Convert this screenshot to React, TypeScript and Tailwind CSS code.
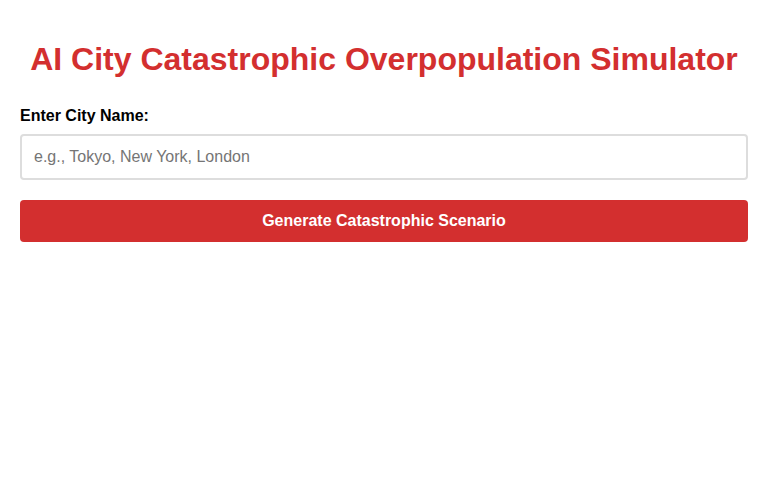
export default function App() {
  return (
    <div className="min-h-[480px] bg-white px-5 pt-[41px]" style={{ fontFamily: '"Liberation Sans", Arial, sans-serif' }}>
      <h1 className="text-center text-[32px] leading-[37px] font-bold text-[#d32f2f]">
        AI City Catastrophic Overpopulation Simulator
      </h1>
      <label className="mt-[29px] mb-[9px] block text-[16px] leading-[18px] font-bold text-black">
        Enter City Name:
      </label>
      <input
        type="text"
        placeholder="e.g., Tokyo, New York, London"
        className="block w-full rounded border-2 border-[#dddddd] p-3 text-[16px] leading-[18px] text-black placeholder:text-[#757575] outline-none"
      />
      <button className="mt-5 block w-full rounded bg-[#d32f2f] p-3 text-[16px] leading-[18px] font-bold text-white">
        Generate Catastrophic Scenario
      </button>
    </div>
  );
}
